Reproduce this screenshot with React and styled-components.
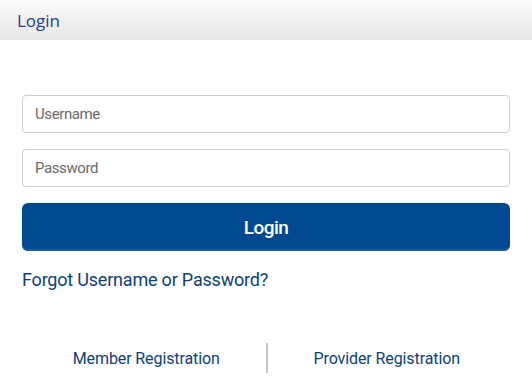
import styled, { createGlobalStyle } from 'styled-components'

const GlobalStyle = createGlobalStyle`
  body {
    margin: 0;
    background: #fff;
    font-family: Roboto, "Liberation Sans", sans-serif;
  }
`

const Page = styled.div`
  width: 532px;
`

const Header = styled.div`
  height: 40px;
  display: flex;
  align-items: center;
  padding: 0 17px;
  background-image: linear-gradient(to bottom, #fbfbfb, #e5e5e5);
  color: #1d418a;
  font-family: "Open Sans", sans-serif;
  font-size: 17px;
`

const Form = styled.form`
  display: flex;
  flex-direction: column;
  padding: 55px 22px 0;
`

const Input = styled.input`
  box-sizing: border-box;
  height: 38px;
  margin-bottom: 16px;
  padding: 0 12px;
  border: 1px solid #cdcdd2;
  border-radius: 4px;
  font-family: Roboto, sans-serif;
  font-size: 15px;
  letter-spacing: -0.4px;
  color: #333;
  outline: none;

  &::placeholder {
    color: #6a6a6a;
  }
`

const Button = styled.button`
  height: 48px;
  border: none;
  border-radius: 6px;
  background: #004990;
  box-shadow: inset 0 -2px 0 #1d5d9c;
  color: #fff;
  font-family: Roboto, sans-serif;
  font-weight: 500;
  font-size: 19px;
  letter-spacing: -0.5px;
`

const Forgot = styled.a`
  margin-top: 18px;
  color: #0d4079;
  font-size: 18px;
  letter-spacing: -0.2px;
  text-decoration: none;
`

const Footer = styled.div`
  display: grid;
  grid-template-columns: 1fr 2px 1fr;
  align-items: center;
  margin-top: 53px;
  padding: 0 26px 0 27px;
`

const FooterLink = styled.a`
  text-align: center;
  color: #0d4079;
  font-size: 16px;
  letter-spacing: -0.1px;
  text-decoration: none;
`

const Divider = styled.div`
  height: 30px;
  background: #c6c6c6;
`

const App = () => (
  <Page>
    <GlobalStyle />
    <Header>Login</Header>
    <Form onSubmit={e => e.preventDefault()}>
      <Input placeholder="Username" />
      <Input type="password" placeholder="Password" />
      <Button type="submit">Login</Button>
      <Forgot href="#">Forgot Username or Password?</Forgot>
    </Form>
    <Footer>
      <FooterLink href="#">Member Registration</FooterLink>
      <Divider />
      <FooterLink href="#">Provider Registration</FooterLink>
    </Footer>
  </Page>
)

export default App
